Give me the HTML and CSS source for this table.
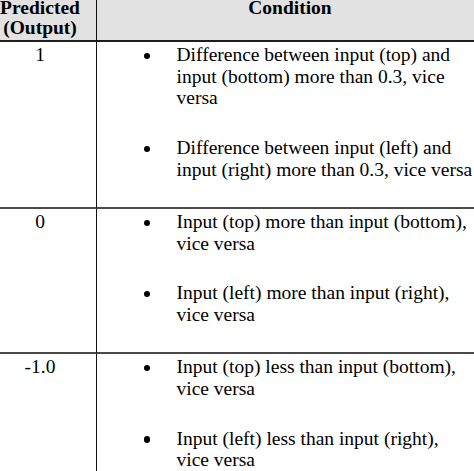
FILE: index.html
```html
<!DOCTYPE html>
<html lang="en">
<head>
<meta charset="utf-8">
<title>Predicted output conditions</title>
<link rel="stylesheet" href="styles.css">
</head>
<body>
<div class="table">
  <div class="cell head first">Predicted<br>(Output)</div>
  <div class="cell head">Condition</div>

  <div class="cell value first">1</div>
  <div class="cell cond">
    <ul class="list">
      <li>Difference between input (top) and input (bottom) more than 0.3, vice versa</li>
      <li>Difference between input (left) and input (right) more than 0.3, vice versa</li>
    </ul>
  </div>

  <div class="cell value first">0</div>
  <div class="cell cond">
    <ul class="list">
      <li>Input (top) more than input (bottom), vice versa</li>
      <li>Input (left) more than input (right), vice versa</li>
    </ul>
  </div>

  <div class="cell value first last">-1.0</div>
  <div class="cell cond last">
    <ul class="list">
      <li>Input (top) less than input (bottom), vice versa</li>
      <li>Input (left) less than input (right), vice versa</li>
    </ul>
  </div>
</div>
</body>
</html>
```

FILE: styles.css
```css
html, body {
  margin: 0;
  padding: 0;
  background: #ffffff;
  overflow: hidden;
}

body {
  font-family: "Liberation Serif", "Times New Roman", serif;
  font-size: 19.5px;
  color: #000000;
}

.table {
  display: grid;
  grid-template-columns: 113px 386px;
  margin: -2px 0 0 -16px;
}

.cell {
  box-sizing: border-box;
  border-bottom: 2px solid #4a4a4a;
}

.cell.first {
  border-right: 1.5px solid #111111;
}

.cell.last {
  border-bottom: none;
}

.head {
  background: #e2e2e2;
  font-weight: bold;
  line-height: 20px;
  text-align: center;
  padding: 0 0 2px;
  border-bottom: 2px solid #1e1e1e;
}

.value {
  text-align: center;
  line-height: 21.7px;
  padding: 2px 0 26.5px;
}

.cond {
  line-height: 21.7px;
  padding: 2px 8.5px 26.5px 0;
}

.list {
  list-style: none;
  margin: 0;
  padding: 0;
}

.list li {
  display: flex;
  align-items: flex-start;
}

.list li + li {
  margin-top: 28px;
}

.list li::before {
  content: "";
  flex-shrink: 0;
  width: 6.5px;
  height: 6.5px;
  border-radius: 50%;
  background: #000000;
  margin: 8.5px 26.5px 0 46.5px;
}
```
